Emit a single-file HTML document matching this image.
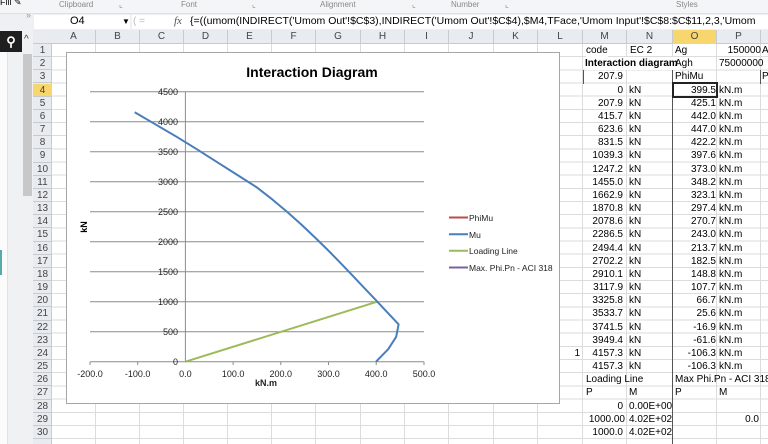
<!DOCTYPE html>
<html><head><meta charset="utf-8"><style>
*{margin:0;padding:0;box-sizing:border-box}
body{width:768px;height:444px;overflow:hidden;position:relative;background:#fff;font-family:"Liberation Sans",Arial,sans-serif;font-size:10px;color:#000}
.a{position:absolute}
.c{position:absolute;height:13px;line-height:13px;font-size:10px;white-space:nowrap}
.r{text-align:right}
.rh{position:absolute;left:33px;width:19px;height:13.17px;line-height:13px;text-align:center;font-size:10px;color:#444;border-bottom:1px solid #c5cbd3}
.ch{position:absolute;top:30px;height:14px;line-height:14px;text-align:center;font-size:10px;color:#444;border-right:1px solid #c5cbd3}
.vl{position:absolute;top:44px;height:400px;width:1px;background:#dadcdd}
.gl{position:absolute;top:0;font-size:8px;color:#888}
</style></head><body>
<div class="a" style="left:0;top:0;width:768px;height:14px;background:#f4f5f7;border-bottom:1px solid #dde1e6"></div>
<div class="gl" style="left:59px">Clipboard</div>
<div class="gl" style="left:119px">⌞</div>
<div class="gl" style="left:181px">Font</div>
<div class="gl" style="left:252px">⌞</div>
<div class="gl" style="left:320px">Alignment</div>
<div class="gl" style="left:412px">⌞</div>
<div class="gl" style="left:451px">Number</div>
<div class="gl" style="left:505px">⌞</div>
<div class="gl" style="left:676px">Styles</div>
<div class="gl" style="left:0;color:#000;font-size:9px;top:-3px">Fill ✎</div>
<div class="a" style="left:0;top:14px;width:768px;height:16px;background:#eef0f3"></div>
<div class="a" style="left:26px;top:10px;font-size:9px;color:#999">»</div>
<div class="a" style="left:34px;top:15px;width:96px;height:14px;background:#fff"></div>
<div class="c" style="left:70px;top:15px;font-size:11px">O4</div>
<div class="c" style="left:122px;top:15px;font-size:8px">▼</div>
<div class="a" style="left:132px;top:15px;width:636px;height:14px;background:#fff"></div>
<div class="c" style="left:133px;top:15px;color:#bbb">( =</div>
<div class="c" style="left:174px;top:15px;font-style:italic;color:#555;font-family:'Liberation Serif',serif;font-size:11px">fx</div>
<div class="c" style="left:190px;top:15px;width:567px;overflow:hidden;font-size:10.5px">{=((umom(INDIRECT('Umom Out'!$C$3),INDIRECT('Umom Out'!$C$4),$M4,TFace,'Umom Input'!$C$8:$C$11,2,3,'Umom Input'!C14:C17)))}</div>
<div class="a" style="left:0;top:30px;width:33px;height:414px;background:#f0f1f3"></div>
<div class="a" style="left:0;top:52px;width:8px;height:392px;background:#fbfbfb;border-right:1px solid #e2e2e2"></div>
<div class="a" style="left:0;top:31px;width:22px;height:21px;background:#1f1f1f;color:#fff;font-size:13px;font-weight:bold;line-height:21px;text-align:center">⚲</div>
<div class="a" style="left:24px;top:34px;font-size:10px;color:#333">^</div>
<div class="a" style="left:23px;top:54px;width:9px;height:142px;background:#c8c8c8"></div>
<div class="a" style="left:0;top:250px;width:2px;height:25px;background:#5aa"></div>
<div class="a" style="left:33px;top:30px;width:735px;height:14px;background:#e8ebf0;border-bottom:1px solid #c5cbd3"></div>
<div class="a" style="left:33px;top:44px;width:19px;height:400px;background:#e8ebf0;border-right:1px solid #c5cbd3"></div>
<div class="ch" style="left:52px;width:44px">A</div>
<div class="ch" style="left:96px;width:44px">B</div>
<div class="ch" style="left:140px;width:44px">C</div>
<div class="ch" style="left:184px;width:44px">D</div>
<div class="ch" style="left:228px;width:44px">E</div>
<div class="ch" style="left:272px;width:44px">F</div>
<div class="ch" style="left:316px;width:45px">G</div>
<div class="ch" style="left:361px;width:44px">H</div>
<div class="ch" style="left:405px;width:44px">I</div>
<div class="ch" style="left:449px;width:45px">J</div>
<div class="ch" style="left:494px;width:44px">K</div>
<div class="ch" style="left:538px;width:45px">L</div>
<div class="ch" style="left:583px;width:44px">M</div>
<div class="ch" style="left:627px;width:46px">N</div>
<div class="ch" style="left:673px;width:44px;background:#f8d66e">O</div>
<div class="ch" style="left:717px;width:44px">P</div>
<div class="a" style="left:52px;top:44px;width:716px;height:400px;background:repeating-linear-gradient(to bottom,transparent 0,transparent 12.17px,#dadcdd 12.17px,#dadcdd 13.17px)"></div>
<div class="vl" style="left:95px"></div><div class="vl" style="left:139px"></div><div class="vl" style="left:183px"></div><div class="vl" style="left:227px"></div><div class="vl" style="left:271px"></div><div class="vl" style="left:315px"></div><div class="vl" style="left:360px"></div><div class="vl" style="left:404px"></div><div class="vl" style="left:448px"></div><div class="vl" style="left:493px"></div><div class="vl" style="left:537px"></div><div class="vl" style="left:582px"></div><div class="vl" style="left:626px"></div><div class="vl" style="left:672px"></div><div class="vl" style="left:716px"></div><div class="vl" style="left:760px"></div>
<div class="a" style="left:672px;top:70px;width:1px;height:374px;background:#555"></div>
<div class="a" style="left:583px;top:70px;width:1px;height:14px;background:#555"></div>
<div class="a" style="left:760px;top:70px;width:1px;height:14px;background:#555"></div>
<div class="a" style="left:672px;top:82px;width:46px;height:16px;border:2px solid #222"></div>
<div class="rh" style="top:44px">1</div><div class="rh" style="top:57.2px">2</div><div class="rh" style="top:70.3px">3</div><div class="rh" style="top:83.5px;background:#f8d66e">4</div><div class="rh" style="top:96.7px">5</div><div class="rh" style="top:109.9px">6</div><div class="rh" style="top:123px">7</div><div class="rh" style="top:136.2px">8</div><div class="rh" style="top:149.4px">9</div><div class="rh" style="top:162.5px">10</div><div class="rh" style="top:175.7px">11</div><div class="rh" style="top:188.9px">12</div><div class="rh" style="top:202px">13</div><div class="rh" style="top:215.2px">14</div><div class="rh" style="top:228.4px">15</div><div class="rh" style="top:241.6px">16</div><div class="rh" style="top:254.7px">17</div><div class="rh" style="top:267.9px">18</div><div class="rh" style="top:281.1px">19</div><div class="rh" style="top:294.2px">20</div><div class="rh" style="top:307.4px">21</div><div class="rh" style="top:320.6px">22</div><div class="rh" style="top:333.7px">23</div><div class="rh" style="top:346.9px">24</div><div class="rh" style="top:360.1px">25</div><div class="rh" style="top:373.3px">26</div><div class="rh" style="top:386.4px">27</div><div class="rh" style="top:399.6px">28</div><div class="rh" style="top:412.8px">29</div><div class="rh" style="top:425.9px">30</div>
<div class="c" style="left:586px;top:44px;background:#fff">code</div>
<div class="c" style="left:630px;top:44px">EC 2</div>
<div class="c" style="left:675px;top:44px">Ag</div>
<div class="c r" style="left:717px;top:44px;width:44px">150000</div>
<div class="c" style="left:762px;top:44px">A</div>
<div class="c" style="left:585px;top:57.2px;font-weight:bold;background:#fff;padding-right:2px">Interaction diagram</div>
<div class="c" style="left:675px;top:57.2px">Agh</div>
<div class="c" style="left:719px;top:57.2px">75000000</div>
<div class="c r" style="left:583px;top:70.3px;width:40px">207.9</div>
<div class="c" style="left:675px;top:70.3px">PhiMu</div>
<div class="c" style="left:762px;top:70.3px">P</div>
<div id="rows"></div>
<script>
var P=["0","207.9","415.7","623.6","831.5","1039.3","1247.2","1455.0","1662.9","1870.8","2078.6","2286.5","2494.4","2702.2","2910.1","3117.9","3325.8","3533.7","3741.5","3949.4","4157.3","4157.3"];
var M=["399.5","425.1","442.0","447.0","422.2","397.6","373.0","348.2","323.1","297.4","270.7","243.0","213.7","182.5","148.8","107.7","66.7","25.6","-16.9","-61.6","-106.3","-106.3"];
var h="";
for(var i=0;i<22;i++){var t=(44+(i+3)*13.17).toFixed(1);
h+='<div class="c r" style="left:583px;top:'+t+'px;width:40px">'+P[i]+'</div><div class="c" style="left:629px;top:'+t+'px">kN</div><div class="c r" style="left:673px;top:'+t+'px;width:43px">'+M[i]+'</div><div class="c" style="left:719px;top:'+t+'px">kN.m</div>';}
h+='<div class="c r" style="left:538px;top:346.9px;width:42px">1</div>';
document.getElementById("rows").innerHTML=h;
</script>
<div class="c" style="left:586px;top:373.3px">Loading Line</div>
<div class="c" style="left:675px;top:373.3px">Max Phi.Pn - ACI 318</div>
<div class="c" style="left:586px;top:386.4px">P</div>
<div class="c" style="left:629px;top:386.4px">M</div>
<div class="c" style="left:675px;top:386.4px">P</div>
<div class="c" style="left:719px;top:386.4px">M</div>
<div class="c r" style="left:583px;top:399.6px;width:40px">0</div>
<div class="c" style="left:629px;top:399.6px">0.00E+00</div>
<div class="c r" style="left:583px;top:412.8px;width:42px">1000.00</div>
<div class="c" style="left:629px;top:412.8px">4.02E+02</div>
<div class="c r" style="left:717px;top:412.8px;width:42px">0.0</div>
<div class="c r" style="left:583px;top:425.9px;width:40px">1000.0</div>
<div class="c" style="left:629px;top:425.9px">4.02E+02</div>
<svg class="a" style="left:0;top:0" width="768" height="444" font-family="Liberation Sans, Arial, sans-serif">
<rect x="66.5" y="52.5" width="493" height="351" fill="#fff" stroke="#a6a6a6"/>
<text x="312" y="77" text-anchor="middle" font-size="14" font-weight="bold">Interaction Diagram</text>
<g stroke="#8c8c8c" stroke-width="1">
<line x1="90" y1="91.7" x2="424" y2="91.7"/><line x1="90" y1="121.7" x2="424" y2="121.7"/><line x1="90" y1="151.7" x2="424" y2="151.7"/><line x1="90" y1="181.7" x2="424" y2="181.7"/><line x1="90" y1="211.7" x2="424" y2="211.7"/><line x1="90" y1="241.7" x2="424" y2="241.7"/><line x1="90" y1="271.7" x2="424" y2="271.7"/><line x1="90" y1="301.7" x2="424" y2="301.7"/><line x1="90" y1="331.7" x2="424" y2="331.7"/><line x1="90" y1="361.7" x2="424" y2="361.7"/>
<line x1="185.4" y1="91.7" x2="185.4" y2="361.7"/>
<line x1="90" y1="361.7" x2="90" y2="365"/><line x1="137.7" y1="361.7" x2="137.7" y2="365"/><line x1="233.1" y1="361.7" x2="233.1" y2="365"/><line x1="280.8" y1="361.7" x2="280.8" y2="365"/><line x1="328.5" y1="361.7" x2="328.5" y2="365"/><line x1="376.2" y1="361.7" x2="376.2" y2="365"/><line x1="424" y1="361.7" x2="424" y2="365"/>
</g>
<g font-size="9" text-anchor="end" fill="#222">
<text x="178" y="95">4500</text><text x="178" y="125">4000</text><text x="178" y="155">3500</text><text x="178" y="185">3000</text><text x="178" y="215">2500</text><text x="178" y="245">2000</text><text x="178" y="275">1500</text><text x="178" y="305">1000</text><text x="178" y="335">500</text><text x="178" y="365">0</text>
</g>
<g font-size="9" text-anchor="middle" fill="#222">
<text x="90" y="377">-200.0</text><text x="137.7" y="377">-100.0</text><text x="185.4" y="377">0.0</text><text x="233.1" y="377">100.0</text><text x="280.8" y="377">200.0</text><text x="328.5" y="377">300.0</text><text x="376.2" y="377">400.0</text><text x="424" y="377">500.0</text>
<text x="266" y="386" font-weight="bold">kN.m</text>
</g>
<text transform="translate(87,227) rotate(-90)" text-anchor="middle" font-size="9" font-weight="bold">kN</text>
<polyline fill="none" stroke="#9bbb59" stroke-width="2" points="185.4,361.7 377.2,301.7"/>
<polyline fill="none" stroke="#4a7ebb" stroke-width="2" stroke-linejoin="round" points="376,361.7 388.2,349.2 396.2,336.8 398.6,324.3 386.8,311.8 375.1,299.3 363.3,286.9 351.5,274.4 339.5,261.9 327.3,249.5 314.5,237 301.3,224.5 287.3,212 272.5,199.6 256.4,187.1 236.8,174.6 217.2,162.2 197.6,149.7 177.3,137.2 156,124.7 134.7,112.3"/>
<g stroke-width="2">
<line x1="449" y1="217.5" x2="468" y2="217.5" stroke="#be4b48"/>
<line x1="449" y1="234.2" x2="468" y2="234.2" stroke="#4a7ebb"/>
<line x1="449" y1="250.8" x2="468" y2="250.8" stroke="#9bbb59"/>
<line x1="449" y1="267.5" x2="468" y2="267.5" stroke="#7d60a0"/>
</g>
<g font-size="8.5" fill="#222">
<text x="469" y="221">PhiMu</text><text x="469" y="238">Mu</text><text x="469" y="254">Loading Line</text><text x="469" y="271">Max. Phi.Pn - ACI 318</text>
</g>
</svg>
</body></html>
